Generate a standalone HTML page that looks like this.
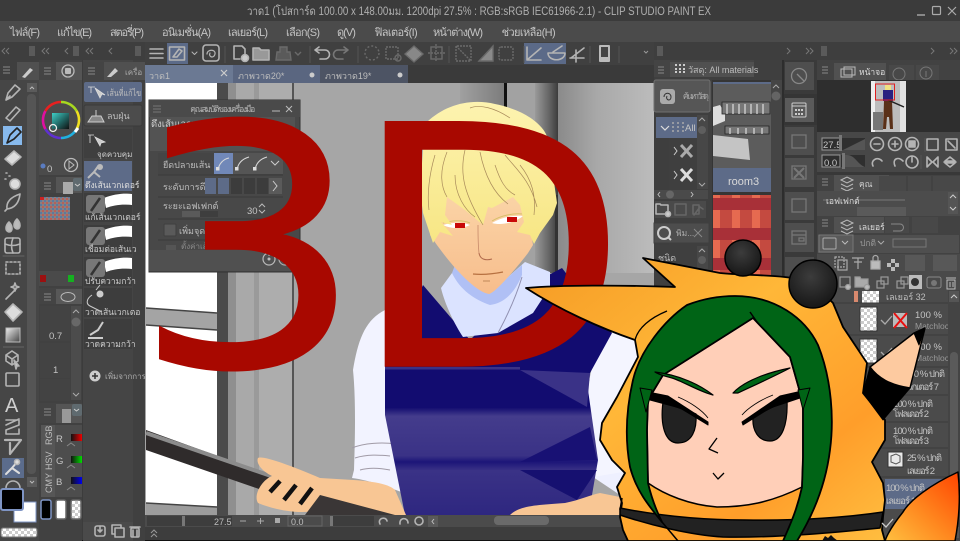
<!DOCTYPE html>
<html><head><meta charset="utf-8"><style>
html,body{margin:0;padding:0;background:#3a3a3a;overflow:hidden}
svg{display:block;position:absolute;left:0;top:0}
text{font-family:"Liberation Sans","Noto Sans CJK SC",sans-serif}
.i{fill:none;stroke:#b4b4b4;stroke-width:1.6;stroke-linecap:round;stroke-linejoin:round}
.d{fill:none;stroke:#6a6a6a;stroke-width:1.4}
.t{fill:#c4c4c4;font-size:9.5px}
.m{fill:#c4c4c4;font-size:11px}
.s{fill:#bdbdbd;font-size:9px}
.b{fill:#545454}
</style></head><body>
<svg width="960" height="541" viewBox="0 0 960 541" xmlns="http://www.w3.org/2000/svg">
<defs>
<linearGradient id="gr1" x1="0" x2="1"><stop offset="0" stop-color="#8a8a8a"/><stop offset=".4" stop-color="#a8a8a8"/><stop offset="1" stop-color="#bcbcbc"/></linearGradient>
<linearGradient id="gr2" x1="0" x2="1"><stop offset="0" stop-color="#a0a0a0"/><stop offset="1" stop-color="#7c7c7c"/></linearGradient>
<linearGradient id="gr3" x1="0" x2="1"><stop offset="0" stop-color="#9a9a9a"/><stop offset=".6" stop-color="#666"/><stop offset="1" stop-color="#3c3c3c"/></linearGradient>
<linearGradient id="hood" x1="0" y1="0" x2="1" y2="1"><stop offset="0" stop-color="#f59a24"/><stop offset=".4" stop-color="#ffb738"/><stop offset=".75" stop-color="#ff9e2a"/><stop offset="1" stop-color="#ffbe40"/></linearGradient>
<linearGradient id="tail" x1="1" y1="0" x2="0" y2="1"><stop offset="0" stop-color="#ff4400"/><stop offset=".55" stop-color="#ff8a20"/><stop offset="1" stop-color="#ffc040"/></linearGradient>
<radialGradient id="ball" cx=".45" cy=".35" r=".7"><stop offset="0" stop-color="#3c3c3c"/><stop offset="1" stop-color="#141414"/></radialGradient>
<linearGradient id="vest" x1="0" y1="0" x2="0" y2="1"><stop offset="0" stop-color="#120c70"/><stop offset=".565" stop-color="#120c70"/><stop offset=".6" stop-color="#443c8c"/><stop offset=".76" stop-color="#3a3286"/><stop offset=".785" stop-color="#1c1578"/><stop offset=".82" stop-color="#3a3286"/><stop offset="1" stop-color="#2e2780"/></linearGradient>
<linearGradient id="skin" x1="0" y1="0" x2="0" y2="1"><stop offset="0" stop-color="#fbd5a8"/><stop offset="1" stop-color="#f7bd8c"/></linearGradient>
<linearGradient id="hair" x1="0" y1="0" x2="0" y2="1"><stop offset="0" stop-color="#fdf3b0"/><stop offset="1" stop-color="#f7e684"/></linearGradient>
<linearGradient id="col" x1="0" y1="0" x2="1" y2="1"><stop offset="0" stop-color="#3fd0c8"/><stop offset=".6" stop-color="#1e5a58"/><stop offset="1" stop-color="#111"/></linearGradient>
<linearGradient id="gs" x1="0" y1="0" x2="1" y2="1"><stop offset="0" stop-color="#eee"/><stop offset="1" stop-color="#444"/></linearGradient>
<linearGradient id="rg" x1="0" x2="1"><stop offset="0" stop-color="#111"/><stop offset="1" stop-color="#e00"/></linearGradient>
<linearGradient id="gg" x1="0" x2="1"><stop offset="0" stop-color="#111"/><stop offset="1" stop-color="#0d0"/></linearGradient>
<linearGradient id="bg" x1="0" x2="1"><stop offset="0" stop-color="#111"/><stop offset="1" stop-color="#00e"/></linearGradient>
<pattern id="chk" width="6" height="6" patternUnits="userSpaceOnUse"><rect width="6" height="6" fill="#fff"/><rect width="3" height="3" fill="#ccc"/><rect x="3" y="3" width="3" height="3" fill="#ccc"/></pattern>
<pattern id="plaid" width="20" height="30" patternUnits="userSpaceOnUse"><rect width="20" height="30" fill="#c44a40"/><rect x="12" width="8" height="30" fill="#e66a50"/><rect y="18" width="20" height="12" fill="#a83038"/></pattern>
<pattern id="pal" width="4" height="4" patternUnits="userSpaceOnUse"><rect width="4" height="4" fill="#8a7f80"/><rect width="2" height="2" fill="#5b7aa0"/><rect x="2" y="2" width="2" height="2" fill="#b5605a"/></pattern>
</defs>

<!-- base -->
<rect width="960" height="541" fill="#3c3c3c"/>
<rect width="960" height="21" fill="#3b3b3b"/>
<text x="247" y="15" fill="#b0b0b0" font-size="11.5" textLength="464" lengthAdjust="spacingAndGlyphs">วาด1 (โปสการ์ด 100.00 x 148.00มม. 1200dpi 27.5% : RGB:sRGB IEC61966-2.1)  - CLIP STUDIO PAINT EX</text>
<path d="M917 15h8" stroke="#aaa" stroke-width="1.4"/><rect x="932.5" y="6.5" width="8" height="8" rx="1" fill="none" stroke="#aaa" stroke-width="1.2"/><path d="M948 7l8 8M956 7l-8 8" stroke="#aaa" stroke-width="1.2"/>

<!-- menu -->
<rect y="21" width="960" height="21" fill="#4b4b4b"/>
<g class="m"><text x="10" y="36" textLength="30">ไฟล์(F)</text><text x="57" y="36" textLength="35">แก้ไข(E)</text><text x="110" y="36" textLength="34">สตอรี่(P)</text><text x="162" y="36" textLength="49">อนิเมชั่น(A)</text><text x="228" y="36" textLength="40">เลเยอร์(L)</text><text x="286" y="36" textLength="34">เลือก(S)</text><text x="336" y="36" textLength="19">ดู(V)</text><text x="374" y="36" textLength="43">ฟิลเตอร์(I)</text><text x="433" y="36" textLength="50">หน้าต่าง(W)</text><text x="501" y="36" textLength="54">ช่วยเหลือ(H)</text></g>

<!-- drag rows -->
<rect y="42" width="145" height="18" fill="#3e3e3e"/><rect x="654" y="42" width="306" height="18" fill="#3e3e3e"/>
<g fill="none" stroke="#777" stroke-width="1"><path d="M5 48l-3 3 3 3M9 48l-3 3 3 3M45 48l-3 3 3 3M49 48l-3 3 3 3M68 48l-3 3 3 3M89 48l-3 3 3 3M93 48l-3 3 3 3M112 48l-3 3 3 3"/><path d="M30 46v10M32 46v10M34 46v10M74 46v10M76 46v10M78 46v10M136 46v10M138 46v10M140 46v10M658 46v10M660 46v10M662 46v10M822 46v10M824 46v10M826 46v10"/><path d="M787 48l3 3-3 3M806 48l3 3-3 3M810 48l3 3-3 3M931 48l3 3-3 3M950 48l3 3-3 3M954 48l3 3-3 3"/></g>

<!-- main toolbar -->
<rect x="145" y="42" width="509" height="23" fill="#404040"/>
<rect x="167" y="43" width="21" height="21" fill="#5b6a88"/>
<rect x="524" y="43" width="42" height="21" fill="#5b6a88"/>
<g class="i">
<path d="M150 49h13M150 53.500h13M150 58h13"/>
<rect x="169.500" y="47" width="15" height="13"/><path d="M173 57l6-8 3 2-5 6z"/>
<path d="M192 52l2.500 2.500 2.500-2.500" stroke-width="1"/>
<rect x="203" y="45" width="16" height="16" rx="3"/><path d="M207 54c0-5 9-5 8 0s-7 3-5-1" stroke-width="1.2"/>
<path d="M234 46h8l3 3v6M234 46v13h6"/><circle cx="245" cy="58" r="3.500" fill="#ccc"/>
<path d="M253 48h6l2 2h8v10h-16z" fill="#999"/>
</g>
<g class="d">
<path d="M276 60h15l-1-8h-3v-5h-7v5h-3z" fill="#5a5a5a"/><path d="M295 52l3 3 3-3"/>
</g>
<path d="M225 46v17M310 46v17M358 46v17M449 46v17M524 46v17M590 46v17M619 46v17" stroke="#555"/>
<g class="i"><path d="M315 50h10a4 4 0 0 1 0 9h-5M315 50l4-3M315 50l4 3"/><path d="M348 50h-10a4 4 0 0 0 0 9h5M348 50l-4-3M348 50l-4 3" stroke="#777"/></g>
<g class="d"><circle cx="372" cy="53" r="7" stroke-dasharray="2 2"/><rect x="386" y="47" width="12" height="12" stroke-dasharray="2 1"/><circle cx="398" cy="58" r="3"/><path d="M405 54l9-8 9 8-9 8z" fill="#888"/><rect x="431" y="47" width="11" height="12"/><path d="M436 44v18M428 53h17" stroke-dasharray="2 1"/>
<path d="M456 46l15 15M456 46v15h15V46z" stroke-dasharray="2 1"/><path d="M479 61l14-15v15z" fill="#8a8a8a"/><rect x="499" y="47" width="14" height="13" rx="2" stroke-dasharray="2 1"/></g>
<g class="i" stroke-width="1.300"><path d="M527 60V47M527 60h14M527 60l14-12"/><path d="M548 53h17c0 9-17 9-17 0zM553 52l9-6" /><path d="M570 58h14M576 62V50M571 58l13-10"/></g>
<rect x="599" y="45" width="11" height="17" rx="1" fill="#bbb"/><rect x="601" y="47" width="7" height="10" fill="#444"/>
<path d="M648 51l-2 2-2-2" stroke="#999" fill="none"/>

<!-- tabs row -->
<rect x="145" y="65" width="509" height="18" fill="#3a3a3a"/>
<rect x="145" y="65" width="88" height="18" fill="#6b7993"/>
<rect x="233" y="65" width="87" height="18" fill="#5a6680"/>
<rect x="320" y="65" width="88" height="18" fill="#4d5464"/>
<text x="149" y="79" class="s" fill="#ddd">วาด1</text><path d="M221 70l6 6M227 70l-6 6" stroke="#ccc" stroke-width="1.2"/>
<text x="238" y="79" class="s">ภาพวาด20*</text><circle cx="312" cy="75" r="2.500" fill="#ccc"/>
<text x="325" y="79" class="s">ภาพวาด19*</text><circle cx="400" cy="75" r="2.500" fill="#ccc"/>

<!-- canvas art -->
<svg x="145" y="83" width="509" height="432" viewBox="145 83 509 432">
<rect x="145" y="83" width="509" height="432" fill="#a6a6a6"/>
<rect x="146" y="83" width="72" height="430" fill="#fff"/>
<polygon points="146,308 228,314 228,331 146,325" fill="#a4a4a4"/>
<path d="M146 308l71 5M146 325l71 5" stroke="#444" stroke-width="1.500" fill="none"/>
<polygon points="146,503 228,507 228,515 146,515" fill="#9c9c9c"/><path d="M146 503l71 4" stroke="#444" stroke-width="1.500"/>
<rect x="217" y="83" width="11" height="432" fill="#4b4b4b"/>
<rect x="228" y="83" width="9" height="432" fill="#8f8f8f"/>
<rect x="236" y="83" width="18" height="432" fill="#a9a9a9"/>
<rect x="254" y="83" width="5" height="432" fill="#9a9a9a"/>
<rect x="259" y="83" width="33" height="432" fill="#adadad"/>
<rect x="292" y="83" width="2" height="432" fill="#555"/>
<rect x="460" y="83" width="45" height="190" fill="url(#gr2)"/>
<rect x="507" y="83" width="28" height="190" fill="#a2a2a2"/>
<rect x="535" y="83" width="23" height="190" fill="url(#gr3)"/>
<rect x="558" y="83" width="96" height="190" fill="url(#gr1)"/>
<rect x="504" y="83" width="3" height="25" fill="#111"/>
<rect x="555" y="195" width="3" height="80" fill="#333"/>

<!-- sleeves -->
<path d="M385 310C365 320 358 340 353 370 356 400 355 440 354 470L352 478C370 480 395 490 402 492L400 320z" fill="#f2f3ff"/>
<path d="M352 448c12-5 30-6 44-4M355 458c12-4 25-3 35-2M360 470c10-3 20-2 30 0" stroke="#a09aa6" fill="none"/>
<path d="M600 330L640 330 640 497 593 477 585 400z" fill="#f4f5ff"/>
<path d="M593 477l30 20 0-25z" fill="#eef0ff"/>
<!-- vest -->
<path d="M423 285L385 366 385 415 405 515 590 515 592 495 598 460 588 390 590 373 612 333 562 268 520 290 470 340z" fill="url(#vest)"/>
<rect x="385" y="367" width="135" height="2.500" fill="#3a3286"/>
<polygon points="520,370 590,373 587,407" fill="#3a3287"/>
<polygon points="520,462 590,427 597,460" fill="#181174"/>
<polygon points="520,470 597,470 577,500" fill="#161070"/>
<!-- collar -->
<path d="M452 273L441 288C445 305 455 325 463 337L498 333 533 313 550 287 550 272 525 262 490 293z" fill="#dbe3ff"/>
<path d="M452 273C460 290 475 300 490 305 505 303 515 292 522 275L522 265 490 293 455 265z" fill="#b0c0f5"/>
<path d="M522 277C515 300 505 320 498 333" stroke="#9090b0" fill="none"/>
<!-- face -->
<path d="M430 235L447 190 525 190 533 245 528 253C515 270 495 293 489 294 475 292 450 265 430 235z" fill="url(#skin)"/>
<path d="M479 253c1 6 6 8 13 6" stroke="#b06a4c" fill="none"/><path d="M473 274c10 1 20 0 30-2" stroke="#b77040" fill="none" stroke-width="1.200"/><path d="M483 281h7" stroke="#c08858"/>
<path d="M478 225C478 235 478 245 479 253" stroke="#c78a6a" fill="none" stroke-width=".8"/>
<!-- eyes -->
<path d="M443 225c10-3 20-3 27 0-8 4-19 4-27 0z" fill="#fff"/><path d="M492 223c10-6 22-8 31-7-7 6-21 10-31 7z" fill="#fff"/>
<rect x="455" y="223" width="10" height="5" fill="#c80808"/><rect x="507" y="217" width="10" height="5" fill="#c80808"/>
<path d="M443 223c10-3 20-3 27 0M492 221c10-6 22-8 31-7" stroke="#d7c06a" fill="none"/>
<!-- hair -->
<path d="M427 122C445 105 470 98 495 104 525 110 545 125 548 140L557 203 553 215 540 233 534 244 530 235 517 232 524 222 520 205 513 197 492 208 488 207 483 225 465 210 447 197 445 215 452 225 441 222 453 236 440 232 433 243 423 213 420 190 423 150z" fill="url(#hair)"/>
<path d="M435 155c-6 20-8 40-6 55M447 152c-8 20-6 35 0 45M465 150c-6 25 0 45 18 75M480 152c4 20 12 40 28 52M505 155c12 15 25 25 32 52M520 165c12 15 16 30 14 50M455 175c0 20 10 35 20 42M495 165c5 15 10 25 20 30M470 108c10-4 25 0 40 10" stroke="#a88a5a" stroke-width=".7" fill="none"/>
<!-- left hand & pole -->
<path d="M146 430L320 493 395 515 380 515 320 510 146 450z" fill="#2f2b2b"/>
<path d="M146 433L300 486 392 515" stroke="#8c8c8c" stroke-width="4" fill="none"/>
<path d="M258 458C262 455 290 465 320 478 350 480 385 480 395 490L406 515 338 515 320 510C300 515 275 510 258 503 253 495 262 480 272 476 260 470 256 462 258 458z" fill="#f8c694"/>
<path d="M270 492l10-11M284 500l12-15M300 504l12-16" stroke="#111" stroke-width="4.500"/>
<path d="M305 515L320 495 395 515z" fill="#3a3636"/>
<path d="M510 515C520 505 540 505 565 503 580 500 590 495 600 493L625 498 625 515z" fill="#f8c694"/>
</svg>

<!-- status bar -->
<rect x="145" y="515" width="509" height="12" fill="#4b4b4b"/>
<rect x="147" y="516" width="85" height="10" fill="#3d3d3d"/>
<rect x="182" y="516" width="3" height="10" fill="#777"/>
<text x="214" y="525" class="s" fill="#ccc">27.5</text>
<path d="M240 521h6M257 521h7M260.500 518v6" stroke="#aaa" stroke-width="1"/><rect x="275" y="518" width="5" height="5" fill="#aaa"/>
<rect x="288" y="516" width="34" height="10" fill="none" stroke="#666"/><text x="291" y="525" class="s" fill="#ccc">0.0</text>
<rect x="332" y="516" width="42" height="10" fill="#3d3d3d"/><rect x="330" y="516" width="3" height="10" fill="#777"/>
<g class="i" stroke-width="1"><path d="M380 524c-3-6 6-8 7-3M400 524c-1-7 8-7 8-1"/><circle cx="419" cy="521" r="4"/></g>
<rect x="428" y="516" width="10" height="11" fill="#5a5a5a"/><path d="M434 519l-2 2.500 2 2.500" stroke="#bbb" fill="none"/>
<rect x="494" y="516" width="55" height="9" rx="4" fill="#6a6a6a"/>
<rect x="145" y="527" width="509" height="13" fill="#3d3d3d"/>
<path d="M151 533l3-3 3 3M151 537l3-3 3 3" stroke="#999" fill="none"/>
<rect y="540" width="960" height="1" fill="#111"/>

<!-- left tool column -->
<rect y="60" width="39" height="481" fill="#464646"/>
<rect y="60" width="39" height="20" fill="#3f3f3f"/><rect x="17" y="62" width="22" height="18" fill="#505050"/>
<path d="M3 67h7M3 70h7M3 73h7" stroke="#888"/><path d="M22 77l8-9 3 2-8 8z" fill="#ccc"/>
<rect x="27" y="83" width="10" height="9" fill="#5b5b5b"/><path d="M30 89l2-2 2 2" stroke="#bbb" fill="none"/>
<rect x="27" y="94" width="9" height="380" rx="4" fill="#555"/>
<rect x="27" y="477" width="10" height="10" fill="#5b5b5b"/><path d="M30 481l2 2 2-2" stroke="#bbb" fill="none"/>
<rect x="3" y="126" width="19" height="19" fill="#87b9ec"/>
<rect x="2" y="458" width="22" height="20" fill="#5b6c8c"/>
<g class="i">
<path d="M6 100l2-7 7-8 5 4-8 8zM6 100l4-4"/>
<path d="M6 118l10-11 4 3-10 11z"/>
<path d="M7 143l3-8 7-7 4 4-7 7z" stroke="#222"/>
<path d="M5 159l9-8 7 6-9 8z" fill="#ddd"/>
<circle cx="15" cy="184" r="5" fill="#ddd"/><path d="M6 173h1M9 176h1M5 179h1" />
<path d="M7 209c-1-7 4-12 13-15-1 9-5 14-13 15zM7 209l-2 2"/>
<path d="M9 222c-4 4-4 9 0 10 4 0 4-6 0-10zM17 219c-4 4-4 9 0 10 4 0 4-6 0-10z" fill="#bbb"/>
<rect x="5" y="238" width="15" height="15" rx="2"/><path d="M5 244c5 2 10 2 15 0M13 238c-2 5-2 10 0 15"/>
<path d="M3 256h21" stroke="#666" stroke-width="1"/>
<rect x="6" y="262" width="14" height="12" stroke-dasharray="2 2"/>
<path d="M6 299l10-10M15 283l1 3 3 1-3 1-1 3-1-3-3-1 3-1z" />
<path d="M13 304l9 8-9 9-8-9z" fill="#ddd"/>
</g>
<rect x="6" y="328" width="14" height="14" fill="url(#gs)" stroke="#bbb"/>
<path d="M3 347h21" stroke="#666"/>
<g class="i">
<path d="M6 355l6-4 6 4v6l-6 4-6-4zM6 355l6 4 6-4M12 359v6"/><path d="M14 360l5 6-2 0-1 3z" fill="#ccc"/>
<rect x="6" y="373" width="13" height="13" rx="1"/>
</g>
<text x="5" y="412" font-size="20" fill="#cfcfcf">A</text>
<g class="i"><path d="M6 420h13v5l-13 5v4h13v-5M6 425l13-6"/>
<path d="M5 440h16l-11 14v-11" fill="none" stroke-width="2.200"/>
<path d="M6 474l6-6 7 5M12 468l5-6" stroke="#ddd" stroke-width="2"/><circle cx="17" cy="462" r="2.500" fill="#ddd"/>
<path d="M6 488a7 7 0 0 1 14 0"/></g>
<rect x="14" y="502" width="22" height="20" fill="#fff" stroke="#7e94c4" stroke-width="1"/>
<rect x="1" y="489" width="22" height="21" rx="2" fill="#000" stroke="#7e94c4" stroke-width="2"/>
<rect x="1" y="528" width="36" height="9" rx="2" fill="url(#chk)" stroke="#777"/>

<!-- col 2 -->
<rect x="39" y="60" width="43" height="481" fill="#414141"/>
<rect x="39" y="62" width="43" height="113" fill="#4b4b4b"/>
<rect x="39" y="62" width="43" height="18" fill="#444"/><rect x="56" y="62" width="26" height="18" fill="#555"/>
<path d="M44 68h7M44 71h7M44 74h7" stroke="#888"/><circle cx="68" cy="71" r="6" fill="none" stroke="#bbb" stroke-width="1.300"/><rect x="65" y="68" width="6" height="6" rx="1" fill="#bbb"/>
<g fill="none" stroke-width="2.600"><path d="M61 102a18 18 0 0 1 15.600 9" stroke="#a8d820"/><path d="M76.600 111a18 18 0 0 1 0 18" stroke="#f0e020"/><path d="M76.600 129a18 18 0 0 1-15.600 9" stroke="#20b0e0"/><path d="M61 138a18 18 0 0 1-15.600-9" stroke="#6030d0"/><path d="M45.400 129a18 18 0 0 1 0-18" stroke="#e010a0"/><path d="M45.400 111a18 18 0 0 1 15.600-9" stroke="#e82020"/></g>
<rect x="52" y="113" width="17" height="16" fill="url(#col)"/>
<circle cx="53" cy="128" r="3.500" fill="none" stroke="#eee" stroke-width="1.300"/><path d="M75 132l3-4" stroke="#fff" stroke-width="3"/>
<circle cx="43" cy="166" r="2.500" fill="#5a7cc0"/><text x="47" y="172" class="t">0</text>
<circle cx="71" cy="165" r="6.500" fill="none" stroke="#bbb" stroke-width="1.300"/><path d="M69 161l5 4-5 4z" fill="none" stroke="#bbb"/>
<rect x="39" y="177" width="43" height="16" fill="#444"/><rect x="56" y="177" width="26" height="16" fill="#555"/>
<path d="M44 183h7M44 186h7M44 189h7" stroke="#888"/><rect x="63" y="182" width="10" height="12" fill="#aaa"/><rect x="73" y="178" width="9" height="13" rx="2" fill="#5f6a6f"/><path d="M75 184l2.500 2 2.500-2" stroke="#ccc" fill="none"/>
<rect x="40" y="197" width="30" height="23" fill="url(#pal)"/><rect x="40" y="197" width="4" height="3" fill="#c22"/>
<rect x="39" y="271" width="43" height="15" fill="#4a4a4a"/><rect x="40" y="275" width="6" height="7" fill="#9b1010"/><rect x="68" y="275" width="6" height="7" fill="#15b020"/>
<rect x="39" y="288" width="43" height="16" fill="#444"/><rect x="56" y="289" width="26" height="15" fill="#585858"/>
<path d="M44 294h7M44 297h7M44 300h7" stroke="#888"/><ellipse cx="68" cy="297" rx="7" ry="4.500" fill="none" stroke="#bbb"/>
<rect x="40" y="306" width="30" height="35" fill="#434343"/><rect x="40" y="343" width="30" height="35" fill="#434343"/><rect x="40" y="379" width="30" height="22" fill="#434343"/>
<text x="49" y="339" class="t" fill="#888">0.7</text><text x="53" y="373" class="t" fill="#888">1</text>
<rect x="71" y="306" width="10" height="94" fill="#4c4c4c"/><circle cx="76" cy="322" r="4.500" fill="#686868"/>
<path d="M73 313l3-3 3 3M73 393l3 3 3-3" stroke="#aaa" fill="none"/>
<rect x="39" y="403" width="43" height="20" fill="#444"/><rect x="56" y="404" width="26" height="19" fill="#555"/>
<path d="M44 409h7M44 412h7M44 415h7" stroke="#888"/><rect x="72" y="404" width="10" height="12" rx="2" fill="#5f6a6f"/><path d="M74 409l2.500 2 2.500-2" stroke="#ccc" fill="none"/>
<rect x="62" y="409" width="9" height="14" fill="#999"/>
<rect x="41" y="425" width="41" height="72" fill="#4d4d4d"/><rect x="41" y="425" width="14" height="72" fill="#565656"/>
<text transform="translate(52,445) rotate(-90)" class="s" font-size="11" fill="#ccc">RGB</text>
<text transform="translate(52,470) rotate(-90)" class="s" fill="#8a8a8a">HSV</text>
<text transform="translate(52,493) rotate(-90)" class="s" fill="#8a8a8a">CMY</text>
<text x="56" y="442" class="t" fill="#ccc">R</text><text x="56" y="464" class="t" fill="#ccc">G</text><text x="56" y="485" class="t" fill="#ccc">B</text>
<rect x="71" y="434" width="11" height="7" fill="url(#rg)"/><rect x="71" y="456" width="11" height="7" fill="url(#gg)"/><rect x="71" y="477" width="11" height="7" fill="url(#bg)"/>
<path d="M67 446l4-3 4 3M67 468l4-3 4 3M67 490l4-3 4 3" stroke="#888" fill="none"/>
<rect x="41" y="500" width="10" height="19" rx="2" fill="#000" stroke="#7e94c4" stroke-width="1.500"/>
<rect x="56" y="500" width="10" height="19" rx="2" fill="#fff" stroke="#666" stroke-width="1.500"/>
<rect x="71" y="500" width="10" height="19" rx="2" fill="url(#chk)" stroke="#666" stroke-width="1.500"/>

<!-- col 3 -->
<rect x="133" y="60" width="12" height="481" fill="#404040"/>
<rect x="83" y="60" width="50" height="481" fill="#454545"/>
<rect x="83" y="62" width="62" height="18" fill="#444"/><rect x="104" y="62" width="41" height="18" fill="#505050"/>
<path d="M88 68h7M88 71h7M88 74h7" stroke="#888"/><path d="M107 77l8-9 3 3-7 6z" fill="#ccc"/><text x="125" y="75" font-size="8" fill="#aaa">เครื่อ</text>
<rect x="84" y="82" width="58" height="20" rx="2" fill="#5d6b88"/>
<rect x="84" y="105" width="58" height="21" rx="2" fill="#4c4c4c" stroke="#3a3a3a"/>
<path d="M88 87h7M91 87v6M95 88l5 10 2-4 3 1z" stroke="#ddd" fill="#ccc" stroke-width=".8"/>
<text x="107" y="96" class="s" fill="#eee" textLength="34" lengthAdjust="spacingAndGlyphs">เส้นที่แก้ไข</text>
<path d="M88 122l4-6h9l3 6zM96 116v-6" stroke="#ccc" fill="#888"/>
<text x="107" y="119" class="s" fill="#ccc">ลบฝุ่น</text>
<rect x="84" y="129" width="48" height="29" fill="#3f3f3f"/>
<path d="M88 135h6M90 135v8M95 137l5 9 1-3 4-1z" stroke="#ddd" fill="#ccc" stroke-width=".8"/><text x="97" y="157" font-size="8" fill="#ccc">จุดควบคุม</text>
<rect x="84" y="161" width="48" height="30" fill="#5d6b88"/>
<path d="M88 178l6-6 6 5M94 172l5-7" stroke="#bbb" stroke-width="2" fill="none"/><circle cx="100" cy="167" r="3" fill="#bbb"/><text x="85" y="188" font-size="8.500" fill="#ddd">ดึงเส้นเวกเตอร์</text>
<g id="sub">
<rect x="84" y="193" width="48" height="29" fill="#3d3d3d"/><path d="M104 198c10-4 20-5 28-4v11c-10-1-18 0-26 3z" fill="#fff"/>
<rect x="86" y="195" width="19" height="18" rx="3" fill="#777"/><path d="M91 211l9-13" stroke="#333" stroke-width="2.500"/><text x="85" y="220" font-size="8.500" fill="#ccc">แก้เส้นเวกเตอร์</text>
<rect x="84" y="225" width="48" height="29" fill="#3d3d3d"/><path d="M104 230c10-4 20-5 28-4v11c-10-1-18 0-26 3z" fill="#fff"/>
<rect x="86" y="227" width="19" height="18" rx="3" fill="#777"/><path d="M91 243l9-13" stroke="#333" stroke-width="2.500"/><text x="85" y="252" font-size="8.500" fill="#ccc">เชื่อมต่อเส้นเว</text>
<rect x="84" y="257" width="48" height="29" fill="#3d3d3d"/><path d="M104 262c10-4 20-5 28-4v11c-10-1-18 0-26 3z" fill="#fff"/>
<rect x="86" y="259" width="19" height="18" rx="3" fill="#777"/><path d="M91 275l9-13" stroke="#333" stroke-width="2.500"/><text x="85" y="284" font-size="8.500" fill="#ccc">ปรับความกว้า</text>
<rect x="84" y="288" width="48" height="29" fill="#3d3d3d"/><path d="M92 295c-6 4-6 9-2 11l12 6M96 290l4-5" stroke="#ccc" fill="none"/><circle cx="100" cy="294" r="3.500" fill="#ccc"/><text x="85" y="315" font-size="8.500" fill="#ccc">วาดเส้นเวกเตอ</text>
<rect x="84" y="319" width="48" height="30" fill="#3d3d3d"/><path d="M90 335l8-5 5-8M88 338h15" stroke="#ccc" stroke-width="2" fill="none"/><text x="85" y="347" font-size="8.500" fill="#ccc">วาดความกว้า</text>
</g>
<circle cx="95" cy="376" r="5.500" fill="#ccc"/><path d="M92 376h6M95 373v6" stroke="#333" stroke-width="1.500"/>
<text x="105" y="379" font-size="8" fill="#aaa">เพิ่มจากการ</text>
<rect x="83" y="522" width="50" height="18" fill="#4a4a4a"/>
<g class="i" stroke-width="1.100"><rect x="95" y="526" width="10" height="10" rx="2"/><path d="M100 526v6M98 530l2 2 2-2"/><rect x="112" y="525" width="9" height="9"/><rect x="115" y="528" width="9" height="9" fill="#4a4a4a"/><rect x="131" y="528" width="8" height="9" rx="1"/><path d="M130 527h10M133 530v6M137 530v6"/></g>

<!-- tool property dialog -->
<rect x="149" y="100" width="151" height="172" fill="#484848" stroke="#333"/>
<rect x="149" y="100" width="151" height="17" fill="#4a4a4a"/>
<path d="M153 106h8M153 109h8M153 112h8" stroke="#777"/>
<text x="189" y="112" font-size="8.500" fill="#b4b4b4" textLength="65">คุณสมบัติของเครื่องมือ</text>
<path d="M272 111h8" stroke="#bbb"/><path d="M286 106l6 6M292 106l-6 6" stroke="#bbb"/>
<rect x="150" y="117" width="145" height="34" fill="#535353"/>
<text x="151" y="127" font-size="9.500" fill="#ccc">ดึงเส้นเวกเตอร์</text>
<rect x="158" y="153" width="124" height="22" fill="#454545"/>
<text x="163" y="168" class="s" fill="#ddd">ยืดปลายเส้น</text>
<rect x="214" y="153" width="19" height="21" fill="#7188b8"/>
<rect x="233" y="153" width="50" height="21" fill="#555"/>
<g fill="none" stroke="#d8d8d8" stroke-width="1.100"><path d="M218 170c1-7 6-11 11-12"/><path d="M237 170c1-7 5-11 12-13"/><path d="M255 170c1-7 5-11 12-13"/></g>
<g fill="#ddd"><rect x="216" y="167" width="3.500" height="3.500"/><rect x="235" y="167" width="3.500" height="3.500"/><rect x="253" y="167" width="3.500" height="3.500"/></g>
<path d="M271 161l4 4 4-4" stroke="#ccc" fill="none"/>
<path d="M158 175h125M158 197h125M158 219h125M158 240h125" stroke="#3a3a3a"/>
<text x="163" y="190" class="s" fill="#ddd">ระดับการดึง</text>
<rect x="205" y="178" width="11" height="16" fill="#5d6b88"/><rect x="218" y="178" width="11" height="16" fill="#5d6b88"/><rect x="231" y="178" width="11" height="16" fill="#3c3c3c"/><rect x="244" y="178" width="11" height="16" fill="#3c3c3c"/><rect x="257" y="178" width="11" height="16" fill="#3c3c3c"/>
<rect x="269" y="178" width="13" height="16" fill="#5a5a5a"/><path d="M273 181l4 5-4 5" stroke="#ccc" fill="none"/>
<text x="163" y="209" class="s" fill="#ddd">ระยะเอฟเฟกต์</text>
<rect x="182" y="211" width="36" height="6" fill="#3e3e3e"/><rect x="182" y="211" width="18" height="6" fill="#5a5a5a"/>
<text x="247" y="214" class="t" fill="#ccc">30</text>
<path d="M259 207l3-3 3 3M259 210l3 3 3-3" stroke="#bbb" fill="none"/>
<rect x="164" y="224" width="12" height="12" rx="1" fill="#5a5a5a" stroke="#3f3f3f"/>
<text x="179" y="234" class="s" fill="#ccc">เพิ่มจุดควบคุม</text>
<text x="181" y="249" font-size="8" fill="#888">ตั้งค่าเส้น</text>
<rect x="166" y="245" width="10" height="5" fill="#555"/>
<rect x="149" y="250" width="151" height="21" fill="#505050"/>
<circle cx="269" cy="259" r="6" fill="none" stroke="#bbb" stroke-width="1.200"/><circle cx="269" cy="259" r="1.500" fill="#bbb"/><path d="M269 253v3" stroke="#bbb"/>
<circle cx="285" cy="259" r="6" fill="none" stroke="#aaa" stroke-width="1.200"/>
<rect x="282" y="224" width="10" height="8" rx="4" fill="#666"/>

<!-- materials panel -->
<rect x="654" y="60" width="129" height="481" fill="#3f3f3f"/>
<rect x="654" y="60" width="100" height="17" fill="#444"/><rect x="670" y="62" width="84" height="15" fill="#505050"/>
<path d="M658 67h6M658 70h6M658 73h6" stroke="#888"/>
<g fill="#ccc"><rect x="675" y="64" width="2" height="2"/><rect x="679" y="64" width="2" height="2"/><rect x="683" y="64" width="2" height="2"/><rect x="675" y="68" width="2" height="2"/><rect x="679" y="68" width="2" height="2"/><rect x="683" y="68" width="2" height="2"/><rect x="675" y="71" width="2" height="2"/><rect x="679" y="71" width="2" height="2"/><rect x="683" y="71" width="2" height="2"/></g>
<text x="688" y="73" class="s" fill="#ccc">วัสดุ: All materials</text>
<rect x="654" y="80" width="15" height="461" fill="#3e3e3e"/>
<rect x="654" y="80" width="56" height="32" rx="2" fill="#565656" stroke="#707070"/>
<rect x="660" y="89" width="15" height="15" rx="3" fill="#aaa"/><path d="M664 97c0-5 7-5 7 0s-6 3-4-1" stroke="#333" fill="none"/>
<text x="681" y="99" font-size="8.500" fill="#aaa" textLength="26">ค้นหาวัสดุ</text>
<rect x="656" y="117" width="52" height="21" fill="#5d6b88"/>
<path d="M661 126l4 4 4-4" stroke="#ddd" fill="none" stroke-width="1.200"/>
<text x="685" y="131" class="t" fill="#ddd">All</text>
<g fill="#aaa"><circle cx="673" cy="123" r="1"/><circle cx="678" cy="123" r="1"/><circle cx="683" cy="123" r="1"/><circle cx="673" cy="127" r="1"/><circle cx="678" cy="127" r="1"/><circle cx="683" cy="127" r="1"/><circle cx="673" cy="131" r="1"/><circle cx="678" cy="131" r="1"/><circle cx="683" cy="131" r="1"/></g>
<rect x="697" y="115" width="11" height="74" fill="#474747"/><circle cx="702" cy="130" r="4" fill="#5e5e5e"/>
<path d="M699 121l3-3 3 3M699 183l3 3 3-3" stroke="#aaa" fill="none"/>
<path d="M674 147l3 4-3 4M674 171l3 4-3 4" stroke="#ccc" fill="none"/>
<path d="M681 145l11 12M692 145l-11 12" stroke="#aaa" stroke-width="3"/>
<path d="M681 169l11 12M692 169l-11 12" stroke="#ddd" stroke-width="3"/>
<rect x="654" y="190" width="54" height="9" fill="#4a4a4a"/><path d="M660 192l-2 2.500 2 2.500M691 192l2 2.500-2 2.500" stroke="#bbb" fill="none"/><circle cx="670" cy="194.500" r="4" fill="#666"/>
<rect x="655" y="201" width="51" height="17" fill="#4a4a4a"/>
<g class="i" stroke-width="1.100"><path d="M656 204h4l1 1h7v9h-12z"/><circle cx="668" cy="214" r="2.500" fill="#ccc"/><path d="M675 204h11v11h-11zM694 215l6-8 3 2M693 205h6v9h-6z" stroke="#666"/></g>
<rect x="654" y="223" width="55" height="20" fill="#4d4d4d" stroke="#3f3f3f"/>
<circle cx="664" cy="233" r="6" fill="none" stroke="#ccc" stroke-width="2"/><path d="M668 237l3 3" stroke="#ccc" stroke-width="2"/>
<text x="676" y="236" font-size="8.500" fill="#aaa">พิม...</text><path d="M694 229l8 8M702 229l-8 8" stroke="#888"/>
<rect x="654" y="245" width="55" height="100" fill="#3f3f3f"/>
<text x="658" y="261" class="s" fill="#ddd">ชนิด</text>
<rect x="697" y="246" width="11" height="70" fill="#474747"/><circle cx="702" cy="260" r="4" fill="#5e5e5e"/><path d="M699 252l3-3 3 3" stroke="#aaa" fill="none"/>
<rect x="712" y="80" width="60" height="461" fill="#353535"/>
<rect x="713" y="82" width="58" height="2" fill="#5d6b88"/>
<rect x="713" y="84" width="58" height="84" fill="#5c5c5c"/>
<path d="M713 107l7-2 5 8 0 8-12 5z" fill="#ddd"/>
<path d="M713 135l35 4 2 21-37-4z" fill="#c4c4c4"/>
<path d="M722 102h48v12h-48zM725 126h44v8h-44z" fill="#777" stroke="#222" stroke-width=".8"/>
<path d="M727 104v10M733 104v10M739 104v10M745 104v10M751 104v10M757 104v10M763 104v10M730 128v6M738 128v6M746 128v6M754 128v6M762 128v6" stroke="#ddd" stroke-width="1.200"/>
<rect x="713" y="168" width="58" height="24" fill="#5d6b88"/>
<text x="728" y="185" font-size="11" fill="#d8d8d8">room3</text>
<rect x="713" y="195" width="58" height="100" fill="url(#plaid)"/>
<rect x="771" y="80" width="11" height="461" fill="#454545"/><circle cx="776" cy="96" r="4.500" fill="#646464"/><path d="M773 88l3-3 3 3" stroke="#aaa" fill="none"/>
<rect x="782" y="60" width="2" height="481" fill="#2d2d2d"/>

<!-- dock -->
<rect x="784" y="60" width="33" height="481" fill="#3a3a3a"/>
<g fill="#4e4e4e"><rect x="785" y="62" width="29" height="28"/><rect x="785" y="98" width="29" height="24"/><rect x="785" y="127" width="29" height="28"/><rect x="785" y="158" width="29" height="29"/><rect x="785" y="192" width="29" height="28"/><rect x="785" y="223" width="29" height="29"/><rect x="785" y="257" width="29" height="29"/></g>
<rect x="784" y="94" width="33" height="31" fill="#353535"/><rect x="785" y="98" width="29" height="24" fill="#5a5a5a"/>
<circle cx="799" cy="76" r="7.500" fill="none" stroke="#888" stroke-width="1.300"/><path d="M797 74l7 7" stroke="#888" stroke-width="1.300"/>
<rect x="792" y="103" width="14" height="14" rx="1" fill="none" stroke="#ccc"/><path d="M792 106h14" stroke="#ccc"/><g fill="#ccc"><rect x="795" y="109" width="2" height="2"/><rect x="798" y="109" width="2" height="2"/><rect x="801" y="109" width="2" height="2"/><rect x="795" y="113" width="2" height="2"/><rect x="798" y="113" width="2" height="2"/><rect x="801" y="113" width="2" height="2"/></g>
<g fill="none" stroke="#777" stroke-width="1.300"><rect x="792" y="135" width="14" height="13"/><rect x="792" y="166" width="14" height="13"/><path d="M794 168l10 10M804 168l-10 10" stroke-width="2"/><rect x="792" y="199" width="14" height="13"/><rect x="792" y="231" width="14" height="13"/><path d="M792 235h14M799 238h5v3h-5z"/></g>
<!-- navigator -->
<rect x="817" y="60" width="143" height="481" fill="#424242"/>
<rect x="817" y="62" width="143" height="18" fill="#424242"/>
<path d="M822 67h6M822 70h6M822 73h6" stroke="#888"/>
<rect x="834" y="63" width="52" height="17" fill="#515151"/><rect x="889" y="65" width="25" height="15" fill="#484848"/><rect x="916" y="65" width="23" height="15" fill="#484848"/>
<rect x="841" y="69" width="11" height="8" fill="none" stroke="#bbb"/><rect x="844" y="67" width="11" height="8" fill="none" stroke="#bbb"/>
<text x="859" y="75" font-size="8.500" fill="#ddd">หน้าจอ</text>
<circle cx="899" cy="74" r="6" fill="none" stroke="#777"/><circle cx="926" cy="73" r="6" fill="none" stroke="#777"/><path d="M926 71v6" stroke="#777"/>
<rect x="817" y="80" width="143" height="52" fill="#2e2e2e"/>
<rect x="871" y="81" width="35" height="51" fill="#bdbdbd"/>
<rect x="871" y="81" width="4" height="51" fill="#eee"/><rect x="900" y="81" width="6" height="51" fill="#e2e2e2"/>
<rect x="873" y="112" width="10" height="18" fill="#777"/>
<path d="M884 101h8l1 28h-3l-1-12h-2l-1 12h-3z" fill="#5a3018"/>
<rect x="883" y="90" width="10" height="11" fill="#2a2080"/><rect x="885" y="85" width="6" height="5" fill="#f0e080"/>
<path d="M888 100l16 7" stroke="#222" stroke-width="1.500"/>
<rect x="875.500" y="84" width="19" height="16" fill="none" stroke="#e02020" stroke-width="1"/>
<rect x="817" y="132" width="143" height="40" fill="#474747"/>
<rect x="822" y="138" width="43" height="12" fill="#2f2f2f"/><rect x="822" y="155" width="43" height="12" fill="#2f2f2f"/>
<rect x="822" y="138" width="18" height="12" fill="none" stroke="#999"/><rect x="822" y="155" width="18" height="12" fill="none" stroke="#999"/>
<text x="823" y="148" class="t" fill="#ddd">27.5</text><text x="824" y="166" class="t" fill="#ddd">0.0</text>
<path d="M843 150l22-11v11z" fill="#555"/><path d="M845 155v12h20c-8-3-10-12-18-12z" fill="#555"/>
<rect x="839" y="135" width="3" height="16" fill="#777"/><rect x="842" y="153" width="3" height="16" fill="#777"/>
<g class="i" stroke-width="1.200"><circle cx="877" cy="144" r="6.500"/><path d="M874 144h6"/><circle cx="895" cy="144" r="6.500"/><path d="M892 144h6M895 141v6"/><circle cx="912" cy="144" r="6.500"/><rect x="909" y="141" width="6" height="6" fill="#b4b4b4"/>
<rect x="927" y="139" width="11" height="11"/><rect x="946" y="139" width="11" height="11"/><path d="M948 141l7 7"/>
<path d="M873 166c-3-6 5-10 9-5M895 166c-3-7 3-10 8-5"/><circle cx="912" cy="162" r="6"/><path d="M912 157v5"/>
<path d="M927 157v10l5-5zM938 157v10l-5-5z"/><path d="M950 157l-5 4h10zM950 167l-5-4h10zM944 162h12"/></g>
<path d="M925 138v14M921 155v14" stroke="#555"/>
<!-- prop -->
<rect x="817" y="172" width="143" height="3" fill="#383838"/>
<rect x="817" y="175" width="143" height="16" fill="#424242"/>
<path d="M822 179h6M822 182h6M822 185h6" stroke="#888"/>
<rect x="834" y="175" width="55" height="16" fill="#515151"/><rect x="879" y="176" width="27" height="15" fill="#484848"/><rect x="908" y="176" width="23" height="15" fill="#484848"/><rect x="933" y="176" width="27" height="15" fill="#484848"/>
<path d="M841 180l6-3 6 3-6 3zM841 184l6 3 6-3M841 188l6 3 6-3" fill="none" stroke="#bbb"/>
<text x="859" y="187" font-size="8.500" fill="#ccc">คุณ</text>
<rect x="817" y="191" width="143" height="25" fill="#4c4c4c"/>
<path d="M823 200h6M856 200h49" stroke="#777"/>
<text x="826" y="204" font-size="8.500" fill="#ddd">เอฟเฟกต์</text>
<rect x="857" y="207" width="49" height="9" fill="#5a5a5a"/>
<rect x="948" y="192" width="10" height="22" fill="#555"/><path d="M950 198l3-3 3 3M950 207l3 3 3-3" stroke="#ccc" fill="none"/>
<rect x="817" y="216" width="143" height="17" fill="#424242"/>
<path d="M822 220h6M822 223h6M822 226h6" stroke="#888"/>
<rect x="834" y="217" width="50" height="16" fill="#515151"/><rect x="885" y="217" width="24" height="16" fill="#484848"/><rect x="912" y="217" width="26" height="16" fill="#484848"/>
<path d="M841 223l6-3 6 3-6 3zM841 227l6 3 6-3M841 231l6 3 6-3" fill="none" stroke="#bbb"/>
<text x="859" y="230" font-size="8.500" fill="#ddd">เลเยอร์</text>
<path d="M891 224h9a3 3 0 0 1 0 7h-7" fill="none" stroke="#888"/>
<rect x="818" y="235" width="141" height="18" fill="#4f4f4f"/>
<rect x="819" y="235" width="34" height="17" fill="#5a5a5a" stroke="#777"/>
<rect x="823" y="238" width="13" height="11" rx="1" fill="none" stroke="#aaa"/><path d="M842 241l3 3 3-3" stroke="#bbb" fill="none"/>
<text x="860" y="246" font-size="8.500" fill="#999">ปกติ</text><path d="M878 241l3 3 3-3" stroke="#aaa" fill="none"/>
<rect x="893" y="239" width="33" height="8" fill="none" stroke="#777"/>
<rect x="817" y="254" width="143" height="19" fill="#4a4a4a"/>
<rect x="817" y="273" width="143" height="17" fill="#4a4a4a"/>
<g fill="none" stroke="#aaa" stroke-width="1.200"><rect x="835" y="257" width="9" height="10" stroke-dasharray="2 1"/><rect x="838" y="260" width="9" height="10"/><path d="M852 258h12M858 258v11M854 262h8"/><rect x="871" y="261" width="9" height="8" fill="#bbb"/><path d="M873 261v-3a2.500 2.500 0 0 1 5 0v3"/></g>
<g fill="#bbb"><rect x="887" y="263" width="4" height="4"/><rect x="891" y="259" width="4" height="4"/><rect x="895" y="263" width="4" height="4"/><rect x="891" y="267" width="4" height="4"/></g>
<rect x="905" y="255" width="20" height="16" fill="#585858"/><rect x="933" y="255" width="24" height="16" fill="#585858"/>
<g fill="none" stroke="#9a9a9a" stroke-width="1.200"><rect x="840" y="277" width="10" height="10"/><circle cx="848" cy="287" r="2.500" fill="#bbb"/><path d="M855 277h5l1 2h7v8h-13z" fill="#aaa"/><circle cx="867" cy="287" r="2.500" fill="#bbb"/><rect x="877" y="281" width="7" height="7"/><rect x="881" y="277" width="7" height="7"/><rect x="897" y="281" width="7" height="7"/><rect x="901" y="277" width="7" height="7"/></g>
<rect x="909" y="275" width="13" height="14" fill="#bbb"/><circle cx="915" cy="282" r="4" fill="#333"/>
<rect x="927" y="277" width="14" height="11" rx="2" fill="none" stroke="#888"/><circle cx="934" cy="283" r="3" fill="#777"/>
<path d="M946 278h10M947 280h8v9h-8zM950 282v5M953 282v5" fill="none" stroke="#bbb"/>
<!-- layers -->
<rect x="817" y="290" width="143" height="251" fill="#4b4b4b"/>
<rect x="854" y="291" width="4" height="11" fill="#d8896e"/>
<rect x="862" y="291" width="17" height="12" fill="url(#chk)"/>
<text x="886" y="300" class="s" fill="#ccc">เลเยอร์ 32</text>
<path d="M817 303h131M817 335h131M817 367h131M817 395h131M817 422h131M817 448h131M817 477h131" stroke="#3b3b3b"/>
<rect x="860" y="307" width="17" height="24" fill="url(#chk)" stroke="#333"/>
<rect x="860" y="339" width="17" height="24" fill="url(#chk)" stroke="#333"/>
<path d="M881 320l4 4 7-8M881 352l4 4 7-8" stroke="#aaa" fill="none" stroke-width="1.300"/>
<rect x="893" y="313" width="14" height="14" fill="#bbb"/><path d="M894 313l13 15M907 313l-13 15" stroke="#e81010" stroke-width="2"/>
<text x="915" y="318" class="t" fill="#ccc">100 %</text><text x="915" y="329" font-size="8.500" fill="#999">Matchlock</text>
<text x="915" y="350" class="t" fill="#ccc">100 %</text><text x="915" y="361" font-size="8.500" fill="#999">Matchlock</text>
<text x="905" y="377" class="t" fill="#ccc" textLength="40">100 % ปกติ</text><text x="905" y="390" class="t" fill="#ccc" textLength="34">เวกเตอร์ 7</text>
<text x="893" y="407" class="t" fill="#ccc" textLength="40">100 % ปกติ</text><text x="893" y="417" class="t" fill="#ccc" textLength="36">โฟลเดอร์ 2</text>
<text x="893" y="434" class="t" fill="#ccc" textLength="40">100 % ปกติ</text><text x="893" y="444" class="t" fill="#ccc" textLength="36">โฟลเดอร์ 3</text>
<rect x="888" y="452" width="15" height="15" fill="#e8e8e8" stroke="#333"/><path d="M891 456l5-2 4 2v6l-4 2-5-2z" fill="none" stroke="#555"/>
<text x="907" y="461" class="t" fill="#ccc" textLength="35">25 % ปกติ</text><text x="907" y="474" class="t" fill="#ccc" textLength="28">เลเยอร์ 2</text>
<rect x="885" y="479" width="63" height="30" fill="#5d6b88"/>
<text x="886" y="491" class="t" fill="#ddd" textLength="39">100 % ปกติ</text><text x="886" y="504" class="t" fill="#ddd" textLength="30">เลเยอร์ 1</text>
<rect x="948" y="290" width="12" height="251" fill="#444"/><rect x="949" y="291" width="10" height="11" fill="#555"/><path d="M951 298l3-3 3 3" stroke="#ccc" fill="none"/><rect x="950" y="352" width="8" height="165" rx="4" fill="#5a5a5a"/><rect x="949" y="527" width="10" height="11" fill="#555"/><path d="M951 531l3 3 3-3" stroke="#ccc" fill="none"/>

<!-- 3D text -->
<g fill="#a80800" stroke="#a80800" stroke-width="1.500">
<text transform="translate(132,366) scale(1.09,1)" font-size="335" style="font-family:'DejaVu Sans',sans-serif">3</text>
<text transform="translate(350,366) scale(1.08,1)" font-size="335" style="font-family:'DejaVu Sans',sans-serif">D</text>
</g>

<!-- mascot -->
<g stroke="#000" stroke-linejoin="round">
<path d="M526 288C560 285 620 285 675 287L643 258 720 273C750 276 790 274 813 283L833 303 843 327 867 363 863 393 885 420 885 440 872 462 883 483 885 500 883 517 882 530 885 541 628 541 623 530 620 517 622 503 617 487 625 473 612 460 600 440 602 423 617 397 638 357 635 340C600 328 560 310 526 288z" fill="url(#hood)" stroke-width="1.800"/>
<path d="M635 340C638 328 650 318 667 311" fill="none" stroke-width="1.300"/>
<!-- ear -->
<path d="M870 367L863 393 883 420 910 388C890 385 878 378 870 367z" fill="#000"/>
<path d="M870 367L914 333 925 328 910 388C890 385 878 378 870 367z" fill="#fdcaa0" stroke-width="1.500"/>
<path d="M914 333L925 328 919 345z" fill="#000"/>
<!-- tail -->
<path d="M958 472C930 485 910 500 903 512 895 522 888 532 885 541L955 541C960 515 960 490 958 472z" fill="url(#tail)" stroke-width="1.500"/>
<!-- belt -->
<path d="M620 508C660 516 700 520 745 520 800 521 850 517 883 512L880 528C840 532 780 538 723 537 690 535 650 525 620 515z" fill="#222" stroke-width="1.500"/>
<path d="M622 498L620 510" fill="none" stroke-width="1.500"/>
<!-- face -->
<path d="M753 318L790 357 803 403 803 457 802 487C770 503 745 507 717 507 690 505 665 495 648 483L647 430 648 400 663 375z" fill="#ffcfb8" stroke-width="1.500"/>
<!-- hair -->
<path d="M735 296C775 296 805 318 818 345 832 380 834 420 830 450 825 490 810 520 797 541L783 541C790 525 797 510 802 487L803 457 803 403 790 357 753 318 663 375 648 400 647 430 648 483C652 500 657 512 662 522 648 505 636 490 630 467 625 440 626 410 633 380 640 350 665 320 687 305 705 298 720 296 735 296z" fill="#006416" stroke-width="1.800"/>
<path d="M662 522L678 541M750 312L757 322" fill="none" stroke-width="1.500"/>
<!-- brows -->
<path d="M655 372C680 375 700 385 713 395 700 392 682 381 672 378 664 376 658 374 655 372z" fill="#006416" stroke-width="1.200"/>
<path d="M733 393C745 380 770 372 790 368 775 376 755 385 738 393z" fill="#006416" stroke-width="1.200"/>
<!-- eyes -->
<path d="M663 402C660 425 665 443 678 443 692 443 697 430 696 414z" fill="#222" stroke-width="1.200"/>
<path d="M787 400C788 425 782 441 770 441 758 441 752 430 753 417z" fill="#222" stroke-width="1.200"/>
<path d="M648 392L668 396 708 422 708 425 680 408 650 400z" fill="#000" stroke-width="1"/>
<path d="M802 391L780 396 742 422 743 425 770 408 800 398z" fill="#000" stroke-width="1"/>
<path d="M678 397C690 402 702 410 708 418M773 395C760 400 748 408 742 415" fill="none" stroke-width=".8"/>
<path d="M640 388L652 390 646 412z" fill="#006416" stroke-width="1"/>
<path d="M810 388L798 390 803 410z" fill="#006416" stroke-width="1"/>
<path d="M717 438L709 449 718 453" fill="none" stroke-width="1.300"/>
<path d="M713 473L718 479 724 473" fill="none" stroke-width="1.300"/>
</g>
<circle cx="813" cy="284" r="24" fill="url(#ball)" stroke="#000" stroke-width="1.500"/>
<circle cx="743" cy="258" r="18" fill="url(#ball)" stroke="#000" stroke-width="1.500"/>
<path d="M822 541l3-5 3 2 3-3 3 3 4 3z" fill="#111"/>
<path d="M882 523l4 4 7-8" stroke="#ccc" fill="none" stroke-width="1.300"/>
</svg>
</body></html>
